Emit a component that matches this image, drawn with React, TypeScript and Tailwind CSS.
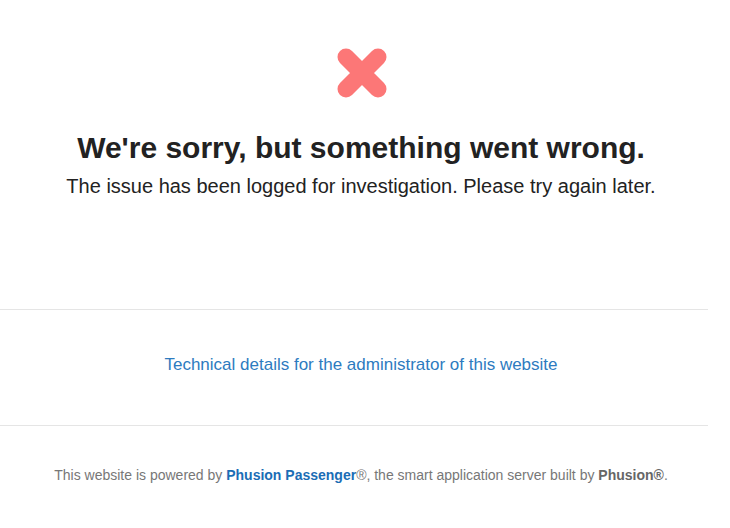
export default function App() {
  return (
    <div className="min-h-screen bg-white font-['Liberation_Sans',Arial,sans-serif]">
      <div className="w-[722px]">
        {/* Error header */}
        <div className="flex flex-col items-center pt-[47px]">
          <svg width="52" height="52" viewBox="0 0 52 52" className="ml-[1px]">
            <path d="M10 10L42 42M42 10L10 42" stroke="#fc7777" strokeWidth="17" strokeLinecap="round" />
          </svg>
          <h1 className="mt-[31px] text-[30px] font-bold leading-[36px] text-[#222]">
            We&apos;re sorry, but something went wrong.
          </h1>
          <p className="mt-[8px] text-[20px] leading-[24px] text-[#222]">
            The issue has been logged for investigation. Please try again later.
          </p>
        </div>

        {/* Technical details */}
        <div className="mt-[111px] w-[708px] border-t border-[#e5e5e5]" />
        <div className="flex h-[115px] items-center justify-center pb-[6px]">
          <a href="#" className="text-[17px] leading-[20px] text-[#2d7bbf]">
            Technical details for the administrator of this website
          </a>
        </div>
        <div className="w-[708px] border-t border-[#e5e5e5]" />

        {/* Footer */}
        <p className="mt-[41px] text-center text-[14px] leading-[16px] text-[#777]">
          This website is powered by{" "}
          <a href="#" className="font-bold text-[#1b6db5]">Phusion Passenger</a>®, the smart application server built by{" "}
          <a href="#" className="font-bold text-[#666]">Phusion®</a>.
        </p>
      </div>
    </div>
  );
}
